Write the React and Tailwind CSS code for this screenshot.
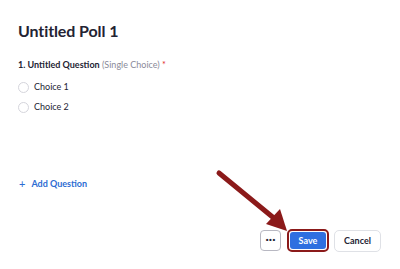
import React from 'react';

const Radio = () => (
    <span className="w-[11px] h-[11px] rounded-full border border-[#d5d5dc] bg-white shrink-0" />
);

const App = () => {
    return (
        <div className="relative w-[400px] h-[269px] bg-white overflow-hidden text-[#232333]" style={{ fontFamily: 'Lato, "Open Sans", sans-serif' }}>
            <div className="flex flex-col h-full pl-[18px] pr-[19px]">
                {/* Title */}
                <h1 className="mt-[19px] text-[16px] font-bold leading-[24px] tracking-[-0.1px]">Untitled Poll 1</h1>

                {/* Question */}
                <div className="mt-[16px] text-[9px] leading-[12px]">
                    <span className="font-bold">1. Untitled Question</span>{' '}
                    <span className="text-[#8a8a99]">(Single Choice)</span>{' '}
                    <span className="text-[#e02828]">*</span>
                </div>
                <div className="mt-[10px] flex flex-col gap-[8px]">
                    <div className="flex items-center gap-[5px] h-[12px]">
                        <Radio />
                        <span className="text-[9px]">Choice 1</span>
                    </div>
                    <div className="flex items-center gap-[5px] h-[12px]">
                        <Radio />
                        <span className="text-[9px]">Choice 2</span>
                    </div>
                </div>

                {/* Add question */}
                <div className="mt-[65px] flex items-center gap-[6px] pl-[1px] text-[#2d6cd2] text-[9px] font-bold h-[12px]">
                    <span className="text-[11px] font-normal">+</span>
                    <span>Add Question</span>
                </div>

                {/* Footer buttons */}
                <div className="mt-auto mb-[17px] flex justify-end items-center gap-[5px]">
                    <button className="w-[21px] h-[21px] rounded-[4px] border border-[#b8b8c2] flex items-center justify-center text-[12px] font-bold leading-none pb-[3px]">
                        ···
                    </button>
                    <button className="ml-[1px] w-[42px] h-[23px] rounded-[5px] border-[2px] border-[#8b1a1a] p-[1px]">
                        <span className="flex w-full h-full items-center justify-center rounded-[3px] bg-[#2f6fe0] text-white text-[9px] font-bold">Save</span>
                    </button>
                    <button className="w-[47px] h-[22px] rounded-[5px] border border-[#dfe1e6] text-[9px] font-bold text-[#232333]">
                        Cancel
                    </button>
                </div>
            </div>

            {/* Annotation arrow */}
            <svg className="absolute left-0 top-0 pointer-events-none" width="400" height="269" viewBox="0 0 400 269">
                <line x1="219" y1="173" x2="275" y2="219" stroke="#8b1a1a" strokeWidth="5" strokeLinecap="round" />
                <polygon points="287,231 266,224 280,209" fill="#8b1a1a" />
            </svg>
        </div>
    );
};

export default App;
